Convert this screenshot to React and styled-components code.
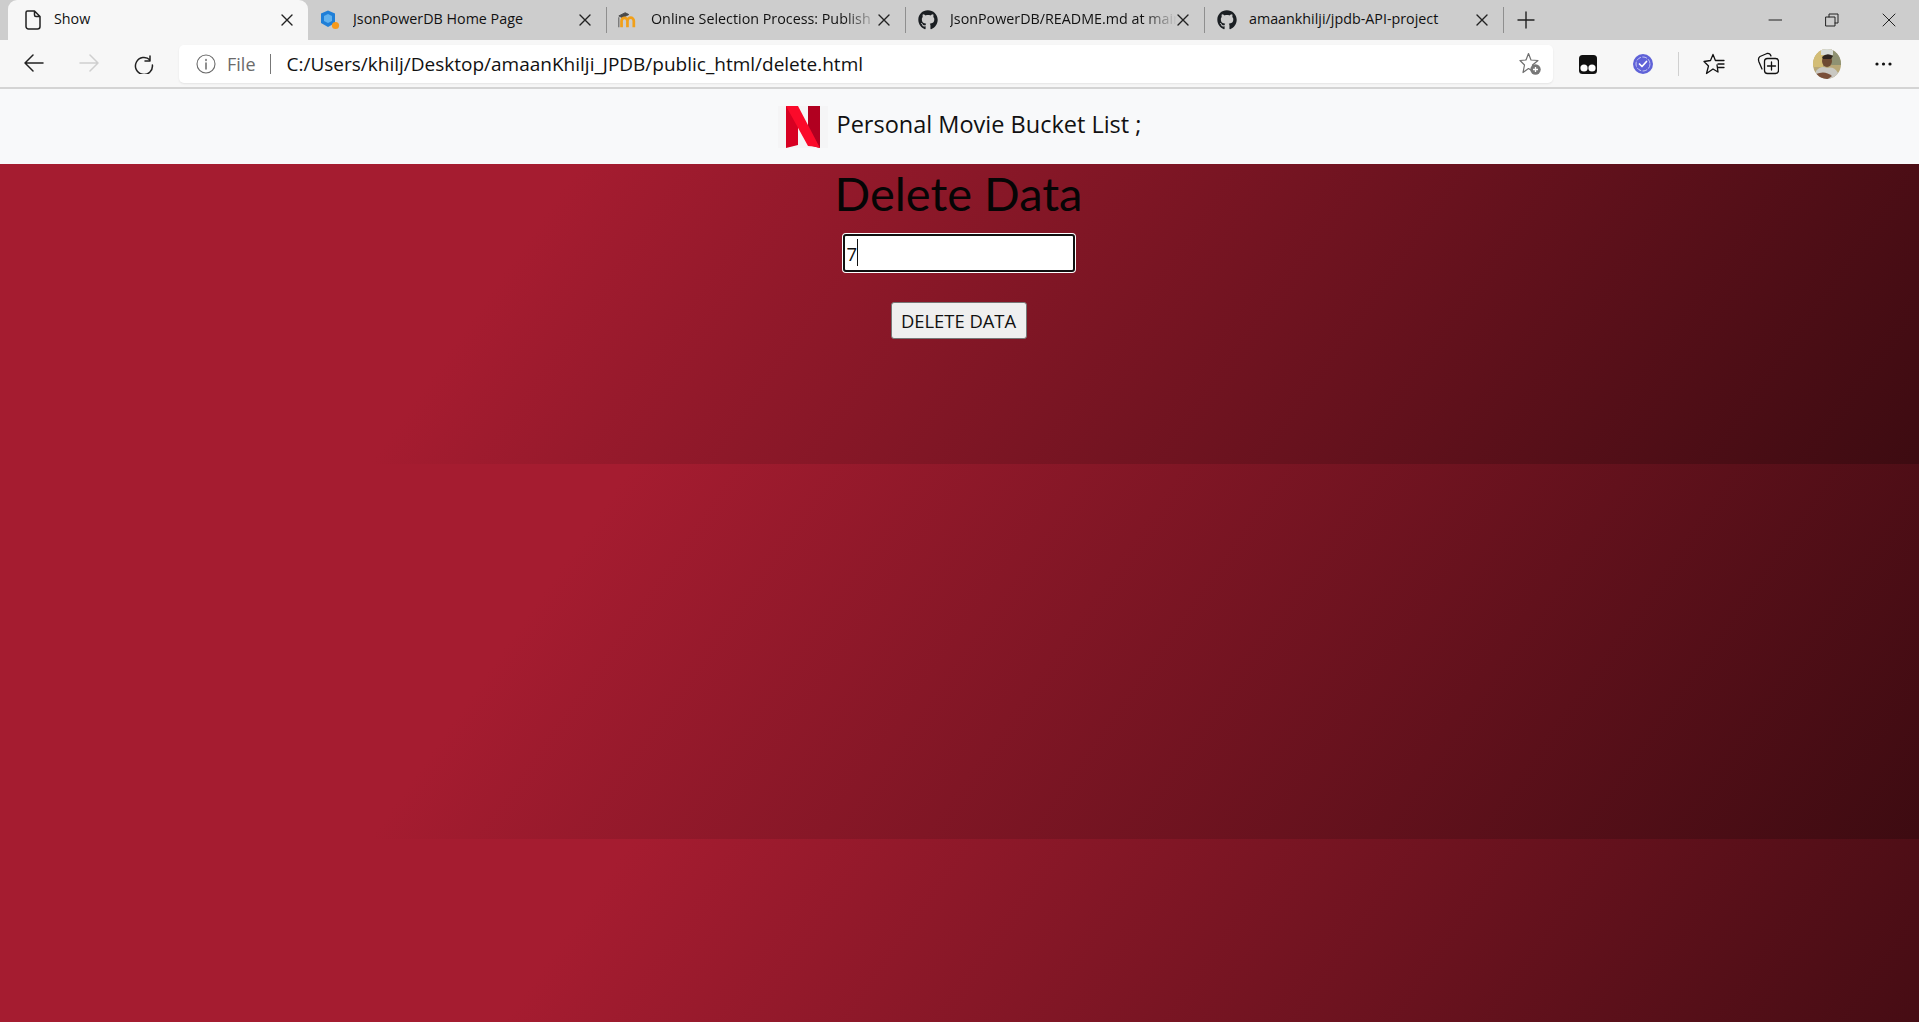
import React from "react";
import styled, { createGlobalStyle } from "styled-components";
import { FaGithub } from "react-icons/fa";

const GlobalStyle = createGlobalStyle`
  html, body { margin: 0; padding: 0; height: 100%; overflow: hidden; }
  body { font-family: "Open Sans", "Liberation Sans", sans-serif; color: #000; }
  * { box-sizing: border-box; }
`;

const Screen = styled.div`
  width: 1919px;
  height: 1022px;
  display: flex;
  flex-direction: column;
`;
const TabStrip = styled.div`
  height: 40px;
  background: #cdcdcd;
  display: flex;
  align-items: flex-end;
  padding-left: 8px;
`;
const Tab = styled.div`
  width: ${(p) => (p.$active ? "300px" : "299px")};
  height: 40px;
  display: flex;
  align-items: center;
  padding-left: ${(p) => p.$pad}px;
  padding-right: 15px;
  border-top-left-radius: 9px;
  border-top-right-radius: 9px;
  background: ${(p) => (p.$active ? "#f7f7f7" : "transparent")};
  border-right: ${(p) => (p.$sep ? "1px solid #8f8f8f" : "none")};
  background-clip: padding-box;
  ${(p) => p.$sep && "border-image: linear-gradient(to bottom, transparent 8px, #8f8f8f 8px, #8f8f8f 32px, transparent 32px) 1;"}
`;
const TabIcon = styled.span`
  width: 20px;
  height: 20px;
  flex: none;
  display: flex;
  align-items: center;
  justify-content: center;
  margin-right: ${(p) => p.$gap}px;
`;
const TabTitle = styled.span`
  flex: 1;
  min-width: 0;
  font-size: 14.3px;
  line-height: 20px;
  padding-bottom: 2px;
  white-space: nowrap;
  overflow: hidden;
  color: #111;
  ${(p) => p.$fade && "mask-image: linear-gradient(to right, #000 85%, transparent 100%);"}
`;
const NewTab = styled.span`
  display: flex;
  margin-left: 13px;
  align-self: center;
`;
const WindowControls = styled.div`
  margin-left: auto;
  display: flex;
  align-self: center;
  padding-right: 23px;
  gap: 43px;
`;
const ToolBar = styled.div`
  height: 49px;
  background: #f7f7f7;
  border-bottom: 2px solid #d4d4d4;
  display: flex;
  align-items: center;
  padding: 1px 0 0 24px;
`;
const NavButtons = styled.div`
  display: flex;
  gap: 35px;
  margin-right: 25px;
`;
const AddressBar = styled.div`
  width: 1374px;
  height: 38px;
  background: #fff;
  border-radius: 5px;
  box-shadow: 0 1px 2px rgba(0, 0, 0, 0.08);
  display: flex;
  align-items: center;
  padding: 0 12px 0 17px;
`;
const FileLabel = styled.span`
  font-size: 18px;
  color: #6b6b6b;
  margin-left: 11px;
`;
const Pipe = styled.span`
  width: 1px;
  height: 20px;
  background: #777;
  margin: 0 16px 0 14px;
`;
const Url = styled.span`
  flex: 1;
  font-size: 19px;
  color: #111;
  white-space: nowrap;
`;
const ToolIcons = styled.div`
  display: flex;
  align-items: center;
  margin-left: 26px;
`;
const ToolSlot = styled.span`
  display: flex;
  margin-left: ${(p) => p.$gap}px;
`;
const ToolDivider = styled.span`
  width: 1px;
  height: 24px;
  background: #d0d0d0;
`;
const Page = styled.div`
  flex: 1;
  background-image: linear-gradient(125deg, #a51c30 29%, #3d0b11 100%);
  background-size: 100% 375px;
  background-repeat: repeat-y;
`;
const NavBar = styled.nav`
  height: 75px;
  background: #f8f9fa;
  display: flex;
  align-items: center;
  justify-content: center;
  gap: 9px;
`;
const Logo = styled.span`
  width: 50px;
  height: 42px;
  background: #f5f5f6;
  display: flex;
  padding-left: 8px;
`;
const Brand = styled.span`
  font-size: 23.5px;
  color: #111;
  margin-bottom: 6px;
`;
const Main = styled.main`
  display: flex;
  flex-direction: column;
  align-items: center;
  padding-right: 2px;
`;
const Title = styled.h1`
  margin: 0;
  font-family: Lato, "Liberation Sans", sans-serif;
  font-weight: 400;
  font-size: 47px;
  line-height: 58px;
  color: #050505;
`;
const InputWrap = styled.div`
  position: relative;
  margin-top: 11px;
`;
const IdInput = styled.input`
  display: block;
  width: 232px;
  height: 38px;
  margin: 1px;
  padding: 0 4px 0 2px;
  border: 2px solid #111;
  border-radius: 3px;
  box-shadow: 0 0 0 1px #fff;
  outline: none;
  background: #fff;
  font-family: "Open Sans", sans-serif;
  font-size: 18.5px;
  color: #111;
`;
const Caret = styled.span`
  position: absolute;
  left: 15px;
  top: 6px;
  width: 1px;
  height: 27px;
  background: #111;
`;
const DeleteButton = styled.button`
  margin-top: 29px;
  width: 136px;
  height: 37px;
  padding: 0;
  background: #efefef;
  border: 1px solid #767676;
  border-radius: 3px;
  font-family: "Open Sans", sans-serif;
  font-size: 18.4px;
  color: #111;
`;

const Svg = ({ size = 20, w, h, children, stroke = "#222", sw = 1.3 }) => (
  <svg width={w || size} height={h || size} viewBox={`0 0 ${w || size} ${h || size}`} fill="none" stroke={stroke} strokeWidth={sw} strokeLinecap="round" strokeLinejoin="round">
    {children}
  </svg>
);

const CloseIcon = ({ size = 12 }) => (
  <Svg size={size} sw={1.4}>
    <path d={`M1 1 L${size - 1} ${size - 1} M${size - 1} 1 L1 ${size - 1}`} />
  </Svg>
);
const PageIcon = () => (
  <Svg w={16} h={20} sw={1.5}>
    <path d="M2.5 1 H9.5 L15 6.5 V16.5 a2.5 2.5 0 0 1 -2.5 2.5 H3.5 a2.5 2.5 0 0 1 -2.5 -2.5 V2.5 A1.5 1.5 0 0 1 2.5 1 Z M9.5 1 V5 A1.5 1.5 0 0 0 11 6.5 H15" />
  </Svg>
);
const CubeIcon = () => (
  <svg width="20" height="20" viewBox="0 0 20 20">
    <path d="M8 0.5 L15 3.5 V13 L8 17 L1 13 V3.5 Z" fill="#1f7fd8" />
    <path d="M8 4 L12 6 V11 L8 13 L4 11 V6 Z" fill="#62b2ee" />
    <circle cx="15.5" cy="15.5" r="3.6" fill="#f79a1c" />
  </svg>
);
const MoodleIcon = () => (
  <svg width="22" height="20" viewBox="0 0 22 20">
    <path d="M2 7 V18 M2 5.5 L9 2 L13 4 L6 7.5 Z" fill="#4a4a4a" stroke="#4a4a4a" strokeWidth="1" />
    <path d="M5 18 V11 A3 3 0 0 1 11.5 11 V18 M11.5 11 A3 3 0 0 1 18.5 11 V18" fill="none" stroke="#f2a019" strokeWidth="3" />
  </svg>
);
const BackIcon = ({ color = "#222", flip }) => (
  <Svg w={20} h={18} stroke={color} sw={1.5}>
    {flip ? <path d="M1 9 H19 M11 1 L19 9 L11 17" /> : <path d="M19 9 H1 M9 1 L1 9 L9 17" />}
  </Svg>
);
const ReloadIcon = () => (
  <Svg sw={1.5}>
    <path d="M16 2 V7 H11 M16 6 A8.5 8.5 0 1 0 18.4 11" />
  </Svg>
);
const InfoIcon = () => (
  <Svg stroke="#6b6b6b" sw={1.1}>
    <circle cx="10" cy="10" r="9" />
    <path d="M10 9 V15 M10 5.5 V6.5" strokeWidth="1.5" />
  </Svg>
);
const StarAddIcon = () => (
  <svg width="22" height="24" viewBox="0 0 22 24" fill="none">
    <path d="M9.5 1.5 L12 8 L19 8.5 L13.5 13 L15 20 L9.5 16.5 L4 20.5 L5.5 13 L1 8.5 L7 8 Z" stroke="#6f6f6f" strokeWidth="1.2" strokeLinejoin="round" />
    <circle cx="16.5" cy="17.5" r="5.2" fill="#777" />
    <path d="M16.5 15 V20 M14 17.5 H19" stroke="#fff" strokeWidth="1.3" />
  </svg>
);
const GhostIcon = () => (
  <svg width="18" height="19" viewBox="0 0 18 19">
    <rect x="0" y="0" width="18" height="19" rx="3.5" fill="#111" />
    <circle cx="5" cy="13" r="3.6" fill="#fff" />
    <circle cx="13" cy="13" r="3.6" fill="#fff" />
  </svg>
);
const BadgeIcon = () => (
  <svg width="20" height="20" viewBox="0 0 20 20" fill="none">
    <circle cx="10" cy="10" r="10" fill="#5f62d8" />
    <circle cx="10" cy="10" r="7" stroke="#cfd0f5" strokeWidth="0.9" strokeDasharray="5 1.4" />
    <path d="M6.5 10 L9 12.5 L13.5 7.5" stroke="#fff" strokeWidth="1.7" strokeLinecap="round" strokeLinejoin="round" />
  </svg>
);
const FavoritesIcon = () => (
  <Svg w={22} h={22} stroke="#111" sw={1.3}>
    <path d="M10 1.5 L12.4 7.5 H19 M14 12 L15 19 L10 16 L3.5 20.5 L5.5 13 L1 8.5 L7.5 7.5 L10 1.5 M15 11 H21 M15 14.5 H21 M13 7.5 H21" />
  </Svg>
);
const CollectionsIcon = () => (
  <Svg w={22} h={24} stroke="#111" sw={1.3}>
    <path d="M5 17 L2 10 Q0.6 6 3 4.5 L10 1.5 Q13 1 14 4" />
    <rect x="7.5" y="6.5" width="14" height="15" rx="3" />
    <path d="M14.5 10 V18 M10.5 14 H18.5" />
  </Svg>
);
const Avatar = () => (
  <svg width="28" height="30" viewBox="0 0 28 30">
    <defs>
      <clipPath id="avatarClip"><ellipse cx="14" cy="15" rx="14" ry="15" /></clipPath>
    </defs>
    <g clipPath="url(#avatarClip)">
      <rect width="28" height="30" fill="#b8a878" />
      <rect x="0" y="0" width="10" height="18" fill="#d3bd76" />
      <rect x="18" y="0" width="10" height="16" fill="#8f9273" />
      <rect x="8" y="0" width="12" height="6" fill="#d8dcd8" />
      <ellipse cx="14" cy="12" rx="5" ry="6" fill="#6e4a32" />
      <path d="M9 8 Q14 3 20 7 L18 10 H10 Z" fill="#2e241f" />
      <path d="M3 22 Q8 16 14 19 Q21 17 25 24 V30 H3 Z" fill="#c9c8c2" />
      <path d="M3 25 Q12 21 19 27 L15 30 H5 Z" fill="#7a4f38" />
    </g>
  </svg>
);
const DotsIcon = () => (
  <svg width="17" height="4" viewBox="0 0 17 4">
    <circle cx="2" cy="2" r="1.6" fill="#111" />
    <circle cx="8.5" cy="2" r="1.6" fill="#111" />
    <circle cx="15" cy="2" r="1.6" fill="#111" />
  </svg>
);
const NetflixMark = () => (
  <svg width="34" height="42" viewBox="0 0 34 42">
    <path d="M0 0 H12 V39 L0 42 Z" fill="#d70022" />
    <path d="M22 0 H34 V42 L22 39 Z" fill="#b10020" />
    <path d="M0 0 H12 L34 42 Q28 40 22 40 Z" fill="#fb0a2a" />
  </svg>
);

const tabs = [
  { title: "Show", icon: <PageIcon />, pad: 15, gap: 11, active: true },
  { title: "JsonPowerDB Home Page", icon: <CubeIcon />, pad: 12, gap: 13 },
  { title: "Online Selection Process: Publish", icon: <MoodleIcon />, pad: 10, gap: 14, sep: true, fade: true },
  { title: "JsonPowerDB/README.md at main", icon: <FaGithub size={20} color="#1b1f23" />, pad: 12, gap: 12, sep: true, fade: true },
  { title: "amaankhilji/jpdb-API-project", icon: <FaGithub size={20} color="#1b1f23" />, pad: 12, gap: 12, sep: true },
];

const App = () => {
  return (
    <Screen>
      <GlobalStyle />
      <TabStrip>
        {tabs.map((tab) => (
          <Tab key={tab.title} $active={tab.active} $pad={tab.pad} $sep={tab.sep || tab.title.startsWith("JsonPowerDB Home")}>
            <TabIcon $gap={tab.gap}>{tab.icon}</TabIcon>
            <TabTitle $fade={tab.fade}>{tab.title}</TabTitle>
            <CloseIcon />
          </Tab>
        ))}
        <NewTab>
          <Svg size={18} sw={1.4}><path d="M9 1 V17 M1 9 H17" /></Svg>
        </NewTab>
        <WindowControls>
          <Svg w={14} h={14} sw={1}><path d="M1 7 H14" /></Svg>
          <Svg w={14} h={14} sw={1}><path d="M1 4 H10 V13 H1 Z M4 4 V1 H13 V10 H10" /></Svg>
          <Svg w={14} h={14} sw={1}><path d="M1 1 L13 13 M13 1 L1 13" /></Svg>
        </WindowControls>
      </TabStrip>
      <ToolBar>
        <NavButtons>
          <BackIcon />
          <BackIcon flip color="#cfcfcf" />
          <ReloadIcon />
        </NavButtons>
        <AddressBar>
          <InfoIcon />
          <FileLabel>File</FileLabel>
          <Pipe />
          <Url>C:/Users/khilj/Desktop/amaanKhilji_JPDB/public_html/delete.html</Url>
          <StarAddIcon />
        </AddressBar>
        <ToolIcons>
          <ToolSlot $gap={0}><GhostIcon /></ToolSlot>
          <ToolSlot $gap={36}><BadgeIcon /></ToolSlot>
          <ToolSlot $gap={25}><ToolDivider /></ToolSlot>
          <ToolSlot $gap={24}><FavoritesIcon /></ToolSlot>
          <ToolSlot $gap={32}><CollectionsIcon /></ToolSlot>
          <ToolSlot $gap={34}><Avatar /></ToolSlot>
          <ToolSlot $gap={34}><DotsIcon /></ToolSlot>
        </ToolIcons>
      </ToolBar>
      <Page>
        <NavBar>
          <Logo><NetflixMark /></Logo>
          <Brand>Personal Movie Bucket List ;</Brand>
        </NavBar>
        <Main>
          <Title>Delete Data</Title>
          <InputWrap>
            <IdInput type="text" value="7" readOnly />
            <Caret />
          </InputWrap>
          <DeleteButton type="button">DELETE DATA</DeleteButton>
        </Main>
      </Page>
    </Screen>
  );
};

export default App;
